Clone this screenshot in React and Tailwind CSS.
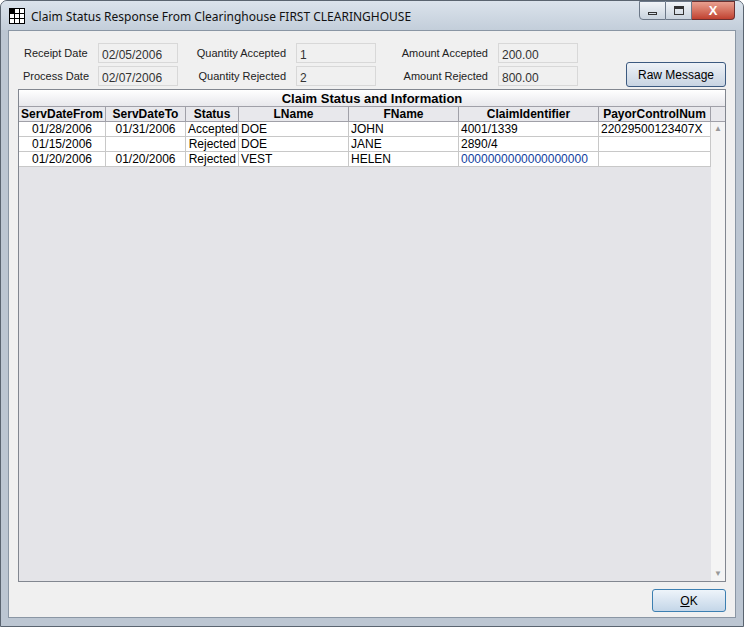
export default function App() {
  const F = { fontFamily: '"Liberation Sans", Arial, sans-serif' };
  const cols = [
    ["ServDateFrom", 87, "text-center"],
    ["ServDateTo", 80, "text-center"],
    ["Status", 53, "text-right"],
    ["LName", 110, "text-left"],
    ["FName", 110, "text-left"],
    ["ClaimIdentifier", 140, "text-left"],
    ["PayorControlNum", 112, "text-left"],
  ];
  const rows = [
    ["01/28/2006", "01/31/2006", "Accepted", "DOE", "JOHN", "4001/1339", "22029500123407X"],
    ["01/15/2006", "", "Rejected", "DOE", "JANE", "2890/4", ""],
    ["01/20/2006", "01/20/2006", "Rejected", "VEST", "HELEN", "0000000000000000000", ""],
  ];
  const Box = ({ v }) => (
    <div className="w-[80px] h-[20px] bg-[#f0f0f0] border border-[#d8d8d8] pl-[3px] pt-[2px] text-[12px] text-[#333]">{v}</div>
  );
  return (
    <div style={F} className="w-[744px] h-[627px] bg-[#bcc6d2] rounded-t-[7px] border border-[#5a6470] flex flex-col text-[12px] text-black overflow-hidden">
      <div className="h-[29px] flex items-start relative bg-gradient-to-b from-[#dbe3ec] to-[#c3ceda]">
        <div className="mt-[7px] ml-[8px] w-[16px] h-[16px] border border-black grid grid-cols-3 gap-[1px] bg-black">
          {Array.from({ length: 9 }).map((_, i) => (
            <div key={i} className={i === 0 ? "bg-black" : "bg-white"} />
          ))}
        </div>
        <div className="ml-[6px] mt-[7px] text-[12px] text-[#111]" style={{ fontFamily: '"Noto Sans", sans-serif' }}>Claim Status Response From Clearinghouse FIRST CLEARINGHOUSE</div>
        <div className="absolute right-[8px] top-0 flex">
          <div className="w-[27px] h-[19px] border border-[#6c7888] rounded-bl-[4px] bg-gradient-to-b from-[#f2f5f8] to-[#c9d3de] flex items-center justify-center"><div className="w-[9px] h-[3px] border border-[#333] mt-[5px]" /></div>
          <div className="w-[26px] h-[19px] border border-l-0 border-[#6c7888] bg-gradient-to-b from-[#f2f5f8] to-[#c9d3de] flex items-center justify-center"><div className="w-[10px] h-[9px] border border-[#333] border-t-[3px]" /></div>
          <div className="w-[43px] h-[19px] border border-l-0 border-[#6c3030] rounded-br-[4px] bg-gradient-to-b from-[#e8a090] to-[#c04030] flex items-center justify-center text-white font-bold text-[13px]">X</div>
        </div>
      </div>
      <div className="mx-[7px] flex-1 bg-[#f0f0f0] border border-[#8a96a4] flex flex-col px-[9px] pt-[12px]">
        <div className="flex h-[45px] text-[11px] whitespace-nowrap">
          <div className="flex flex-col gap-[3px]">
            <div className="flex items-center"><span className="w-[80px] pl-[6px] text-[#222]">Receipt Date</span><Box v="02/05/2006" /></div>
            <div className="flex items-center"><span className="w-[80px] pl-[5px] text-[#222]">Process Date</span><Box v="02/07/2006" /></div>
          </div>
          <div className="flex flex-col gap-[3px]">
            <div className="flex items-center"><span className="w-[118px] text-right pr-[10px] text-[#222]">Quantity Accepted</span><Box v="1" /></div>
            <div className="flex items-center"><span className="w-[118px] text-right pr-[10px] text-[#222]">Quantity Rejected</span><Box v="2" /></div>
          </div>
          <div className="flex flex-col gap-[3px]">
            <div className="flex items-center"><span className="w-[122px] text-right pr-[10px] text-[#222]">Amount Accepted</span><Box v="200.00" /></div>
            <div className="flex items-center"><span className="w-[122px] text-right pr-[10px] text-[#222]">Amount Rejected</span><Box v="800.00" /></div>
          </div>
          <div className="ml-auto mt-[19px] w-[100px] h-[25px] rounded-[3px] border border-[#3c5a80] bg-gradient-to-b from-[#eef2f7] to-[#c8d4e2] flex items-center justify-center text-[12px]">Raw Message</div>
        </div>
        <div className="mt-[1px] h-[493px] border border-[#828790] bg-[#e4e4e8] flex flex-col">
          <div className="h-[17px] bg-gradient-to-b from-[#ffffff] to-[#e8e8ec] border-b border-[#a0a0a8] text-center font-bold text-[13px] leading-[17px]">Claim Status and Information</div>
          <div className="flex flex-1">
            <div className="flex flex-col">
              <div className="flex h-[15px] bg-[#e8e8ec] border-b border-[#a0a0a8]">
                {cols.map(([n, w], i) => (
                  <div key={n} style={{ width: w }} className="border-r border-[#a0a0a8] text-center font-bold text-[12px] leading-[14px] overflow-hidden whitespace-nowrap">{n}</div>
                ))}
              </div>
              {rows.map((r, ri) => (
                <div key={ri} className="flex h-[15px] bg-white border-b border-[#c8c8c8]">
                  {r.map((c, ci) => (
                    <div key={ci} style={{ width: cols[ci][1] }} className={`border-r border-[#c8c8c8] px-[2px] leading-[14px] whitespace-nowrap overflow-hidden ${cols[ci][2]} ${ci === 5 && ri === 2 ? "text-[#1040a0]" : ""}`}>{c}</div>
                  ))}
                </div>
              ))}
            </div>
            <div className="flex-1 flex flex-col">
              <div className="h-[15px] bg-[#e8e8ec] border-b border-[#a0a0a8]" />
              <div className="flex-1 bg-[#f4f4f4] flex flex-col justify-between items-center text-[8px] text-[#999] py-[1px]">
                <span>▲</span><span>▼</span>
              </div>
            </div>
          </div>
        </div>
        <div className="flex justify-end mt-[7px]">
          <div className="w-[74px] h-[23px] rounded-[3px] border border-[#3c7fb1] bg-gradient-to-b from-[#eef4fa] to-[#c4d6e8] flex items-center justify-center text-[12px]"><span className="underline">O</span>K</div>
        </div>
      </div>
      <div className="h-[8px]" />
    </div>
  );
}
